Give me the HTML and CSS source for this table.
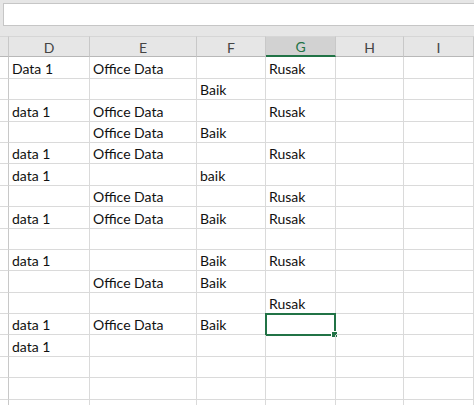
FILE: index.html
```html
<!DOCTYPE html>
<html>
<head>
<meta charset="utf-8">
<link rel="stylesheet" href="styles.css">
</head>
<body>
<div class="app">
  <div class="formula-area">
    <div class="formula-box"></div>
  </div>
  <div class="sheet">
    <div class="hdr corner"></div>
    <div class="hdr">D</div>
    <div class="hdr">E</div>
    <div class="hdr">F</div>
    <div class="hdr sel">G</div>
    <div class="hdr">H</div>
    <div class="hdr">I</div>

    <div class="rh"></div><div class="c">Data 1</div><div class="c">Office Data</div><div class="c"></div><div class="c">Rusak</div><div class="c"></div><div class="c"></div>
    <div class="rh"></div><div class="c"></div><div class="c"></div><div class="c">Baik</div><div class="c"></div><div class="c"></div><div class="c"></div>
    <div class="rh"></div><div class="c">data 1</div><div class="c">Office Data</div><div class="c"></div><div class="c">Rusak</div><div class="c"></div><div class="c"></div>
    <div class="rh"></div><div class="c"></div><div class="c">Office Data</div><div class="c">Baik</div><div class="c"></div><div class="c"></div><div class="c"></div>
    <div class="rh"></div><div class="c">data 1</div><div class="c">Office Data</div><div class="c"></div><div class="c">Rusak</div><div class="c"></div><div class="c"></div>
    <div class="rh"></div><div class="c">data 1</div><div class="c"></div><div class="c">baik</div><div class="c"></div><div class="c"></div><div class="c"></div>
    <div class="rh"></div><div class="c"></div><div class="c">Office Data</div><div class="c"></div><div class="c">Rusak</div><div class="c"></div><div class="c"></div>
    <div class="rh"></div><div class="c">data 1</div><div class="c">Office Data</div><div class="c">Baik</div><div class="c">Rusak</div><div class="c"></div><div class="c"></div>
    <div class="rh"></div><div class="c"></div><div class="c"></div><div class="c"></div><div class="c"></div><div class="c"></div><div class="c"></div>
    <div class="rh"></div><div class="c">data 1</div><div class="c"></div><div class="c">Baik</div><div class="c">Rusak</div><div class="c"></div><div class="c"></div>
    <div class="rh"></div><div class="c"></div><div class="c">Office Data</div><div class="c">Baik</div><div class="c"></div><div class="c"></div><div class="c"></div>
    <div class="rh"></div><div class="c"></div><div class="c"></div><div class="c"></div><div class="c">Rusak</div><div class="c"></div><div class="c"></div>
    <div class="rh"></div><div class="c">data 1</div><div class="c">Office Data</div><div class="c">Baik</div><div class="c active"><span class="handle"></span></div><div class="c"></div><div class="c"></div>
    <div class="rh"></div><div class="c">data 1</div><div class="c"></div><div class="c"></div><div class="c"></div><div class="c"></div><div class="c"></div>
    <div class="rh"></div><div class="c"></div><div class="c"></div><div class="c"></div><div class="c"></div><div class="c"></div><div class="c"></div>
    <div class="rh"></div><div class="c"></div><div class="c"></div><div class="c"></div><div class="c"></div><div class="c"></div><div class="c"></div>
    <div class="rh"></div><div class="c"></div><div class="c"></div><div class="c"></div><div class="c"></div><div class="c"></div><div class="c"></div>
  </div>
</div>
</body>
</html>
```

FILE: styles.css
```css
* { box-sizing: border-box; }
html, body {
  margin: 0;
  padding: 0;
  width: 474px;
  height: 405px;
  overflow: hidden;
  background: #ffffff;
}
.app {
  width: 474px;
  height: 405px;
  overflow: hidden;
  font-family: Lato, "Open Sans", sans-serif;
}
.formula-area {
  height: 36px;
  background: #e6e6e6;
  padding: 3px 0 0 3px;
}
.formula-box {
  height: 23px;
  background: #ffffff;
  border: 1px solid #c6c6c6;
  border-right: none;
}
.sheet {
  display: grid;
  grid-template-columns: 9px 81px 107px 69px 70px 68px 70px;
  grid-auto-rows: 21.4px;
  width: 474px;
}
.hdr {
  background: #e6e6e6;
  border-right: 1px solid #c8c8c8;
  border-bottom: 1px solid #b8b8b8;
  border-top: 1px solid #d6d6d6;
  color: #444444;
  font-size: 14px;
  display: flex;
  align-items: center;
  justify-content: center;
  padding-top: 1px;
}
.hdr.sel {
  background: #d2d2d2;
  color: #217346;
  border-bottom: 2px solid #217346;
}
.rh {
  background: #ffffff;
  border-right: 1px solid #c8c8c8;
  border-bottom: 1px solid #dadada;
}
.c {
  position: relative;
  border-right: 1px solid #dadada;
  border-bottom: 1px solid #dadada;
  font-size: 14px;
  color: #111111;
  padding: 0 0 1px 3px;
  display: flex;
  align-items: flex-end;
  white-space: nowrap;
}
.c.active {
  border: 2px solid #217346;
  margin: -1px 0 -1px -1px;
}
.handle {
  position: absolute;
  right: -4px;
  bottom: -4px;
  width: 5px;
  height: 5px;
  background: #217346;
  border: 1px solid #ffffff;
  box-sizing: content-box;
}
```
